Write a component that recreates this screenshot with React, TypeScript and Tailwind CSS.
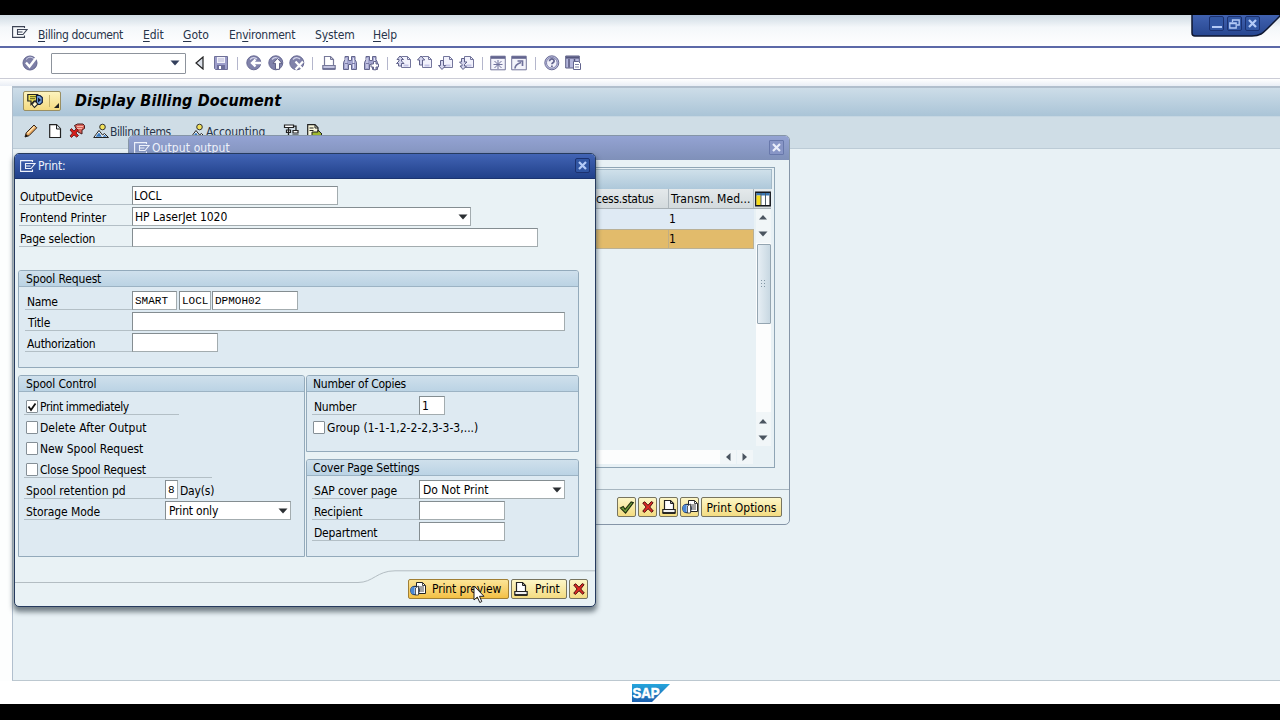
import React from "react";

type IconProps = { className?: string };

const Svg = ({ children, className = "h-4 w-4" }: { children: React.ReactNode; className?: string }) => (
  <svg viewBox="0 0 16 16" className={`shrink-0 ${className}`} fill="none">
    {children}
  </svg>
);

const MenuIcon = ({ className = "" }: IconProps) => (
  <svg viewBox="0 0 16 12" className={`h-3 w-4 shrink-0 ${className}`} fill="none" stroke="currentColor" strokeWidth="1.100">
    <path d="M12.500 2V.6H.6v10.800h11.900V9.500" />
    <path d="M15 3.500H5.500v5h5.500zM5.500 6h5" />
  </svg>
);

const OkIcon = () => (
  <Svg>
    <circle cx="8" cy="8" r="7" fill="#7d7fa6" stroke="#62648f" />
    <path d="M4 4.500Q8 0 12 4" stroke="#c9cbe4" />
    <path d="M4 7.500l3.500 4L14 3" stroke="#fff" strokeWidth="2.400" />
  </Svg>
);

const SaveIcon = () => (
  <Svg>
    <path d="M1.500 1.500h13v13h-12l-1-1z" fill="#9c9dca" stroke="#6f7098" />
    <path d="M4 2h8v6H4z" fill="#f2f2fa" />
    <path d="M5 4h6M5 6h6" stroke="#b5b5d5" />
    <path d="M4 10h8v5H4z" fill="#6d6e9a" />
    <path d="M6 11h2v3H6z" fill="#fff" />
  </Svg>
);

const RoundIcon = ({ kind }: { kind: "back" | "up" | "cancel" | "help" }) => (
  <Svg>
    <circle cx="7.800" cy="7.800" r="7" fill={kind === "help" ? "#b9bbdc" : "#8082aa"} stroke="#686a94" />
    {kind !== "help" && <path d="M4 4.500Q7 1 11 4" stroke="#d6d7ec" strokeWidth="1.200" />}
    {kind === "back" && <path d="M15.500 8H5.500M9.500 4.500L6 8l3.500 3.500" stroke="#fff" strokeWidth="2.400" />}
    {kind === "up" && <path d="M9.500 3.500l4.500 4.800h-2.500v6h-4v-6H5z" fill="#fff" stroke="#55577f" strokeWidth=".9" />}
    {kind === "cancel" && <path d="M6.500 6.500l7.500 8M14 6.500l-7.500 8" stroke="#fff" strokeWidth="2.200" />}
    {kind === "help" && (
      <>
        <circle cx="7.800" cy="7.800" r="5.300" fill="#f1f1fa" stroke="#7f81aa" />
        <path d="M5.500 6.300c0-3.200 4.800-3 4.600-.2C10 7.800 7.900 7.600 7.900 9.300M7.900 10.500v1.600" stroke="#62648f" strokeWidth="1.700" />
      </>
    )}
  </Svg>
);

const PrintIcon = ({ muted = false }: { muted?: boolean }) => (
  <Svg>
    <path d="M3.500 10.500v-9h6l3 3v6z" fill="#fff" stroke={muted ? "#77799a" : "#222"} strokeWidth="1.200" />
    <path d="M9.500 1.500v3h3" stroke={muted ? "#77799a" : "#222"} />
    <path d="M1.800 10.500h12.400v3.500H1.800z" fill={muted ? "#c3c4e0" : "#f2f2f2"} stroke={muted ? "#77799a" : "#222"} strokeWidth="1.200" />
    <path d="M1.800 14h12.400" stroke={muted ? "#66688f" : "#111"} strokeWidth="1.600" />
  </Svg>
);

const FindIcon = ({ plus = false }: { plus?: boolean }) => (
  <Svg>
    <path d="M3 1.500h3.500v4h3v-4H13v3l1.500 3v7h-5v-5h-3v5h-5v-7L3 4.500z" fill="#a5a6d0" stroke="#64668d" />
    <path d="M4 3v10M11.500 3v10" stroke="#e4e4f5" />
    <path d="M3 8.500h3M10 8.500h3" stroke="#7779a5" />
    {plus && <path d="M10.500 6.500h2.500v2.500h2.500v3H13v2.800h-2.500V12H8V9h2.500z" fill="#fff" stroke="#64668d" />}
  </Svg>
);

const PageNavIcon = ({ kind }: { kind: "first" | "prev" | "next" | "last" }) => (
  <Svg>
    <path d="M5.500 1.500h6l3 3v8h-9z" fill="#f2f2fc" stroke="#74769c" />
    <path d="M11.500 1.500v3h3" stroke="#74769c" />
    <path d="M7.500 10.500h5" stroke="#c4c5e6" strokeWidth="2" />
    {kind === "first" && <path d="M4 1l3.500 3.500H5.500V6L8 8.500H5.500V11h-3V8.500H.5L3 6V4.500H1z" fill="#d5d6ee" stroke="#5f618a" />}
    {kind === "prev" && <path d="M4 1l3.700 4H5.500v5h-3V5H.5z" fill="#d5d6ee" stroke="#5f618a" />}
    {kind === "next" && <path d="M4 14.500l3.700-4H5.500v-5h-3v5H.5z" fill="#d5d6ee" stroke="#5f618a" />}
    {kind === "last" && <path d="M4 14.500l3.500-3.500H5.500V9.500L8 7H5.500V3.500h-3V7H.5L3 9.500V11H1z" fill="#d5d6ee" stroke="#5f618a" />}
  </Svg>
);

const SessionIcon = ({ arrow = false }: { arrow?: boolean }) => (
  <Svg>
    <path d="M.7 1.200h14.600v13.600H.7z" fill="#f3f3fb" stroke="#74769c" />
    <path d="M1 2.500h14" stroke="#62648e" strokeWidth="2.600" />
    {arrow ? (
      <path d="M4 13.500q0-4 6-6M6.500 6h5v5" stroke="#70729c" strokeWidth="1.700" />
    ) : (
      <path d="M8 5v9M3.500 9.500h9M4.500 6l7 7M11.500 6l-7 7" stroke="#70729c" strokeWidth="1" />
    )}
  </Svg>
);

const LayoutIcon = () => (
  <Svg>
    <path d="M.7 1h13.600v12H.7z" fill="#b4b6dc" stroke="#5d5f86" />
    <path d="M1 2.500h13" stroke="#55577d" strokeWidth="2.200" />
    <path d="M4 4v8.500M9.500 4v3" stroke="#55577d" strokeWidth="1.500" />
    <path d="M8.500 6.500h5l2 2v6h-7z" fill="#fff" stroke="#62648e" />
    <path d="M10 9.500h4M10 12h4" stroke="#8082a8" />
  </Svg>
);

const ServicesIcon = () => (
  <Svg>
    <path d="M.8 1.500h10v6.500H7l-3 3.500V8H.8z" fill="#efe255" stroke="#222" strokeWidth="1.200" />
    <path d="M3 3.700h6M3 5.700h5" stroke="#555a20" />
    <path d="M9.500 2.500h3.500l2.300 2v5l-2.300 2H9.500z" fill="#6fa0e0" stroke="#111b38" strokeWidth="1.200" />
    <path d="M11 4.500l3 2.500-3 2.500z" fill="#111b38" />
    <path d="M5 11.500L8 8l3 3-3.500 3.500z" fill="#fff8cc" stroke="#222" strokeWidth="1.100" />
  </Svg>
);

const PencilIcon = () => (
  <Svg>
    <path d="M2 14l1.200-4.200L11 2l2.800 2.800L6 12.700z" fill="#e8a65c" stroke="#33251c" />
    <path d="M4.500 10.500l7-7" stroke="#ffe8b8" strokeWidth="1.300" />
    <path d="M2 14l1.200-2.700L5 13z" fill="#111" />
  </Svg>
);

const DocIcon = () => (
  <Svg>
    <path d="M2.700 1.700h6.800l4 4v8.800H2.700z" fill="#fff" stroke="#222" strokeWidth="1.200" />
    <path d="M9.500 2v4h4" fill="#dfe8ee" stroke="#222" />
  </Svg>
);

const CancelDocIcon = () => (
  <Svg>
    <path d="M5.500 2.500l3-1.500H14l1.500 1.500v3L13 7v4l-4-2z" fill="#d9625a" stroke="#4a1c1c" />
    <path d="M8 3.500h6M8 5.500h5" stroke="#f6b8a8" />
    <path d="M2.500 5.500L5 8l2.500-2.500L9.300 7.300 7 10l2.500 2.500-1.700 1.700L5 12l-2.500 2.500L1 13l2.500-3L1 7z" fill="#d51f1c" stroke="#5a1111" strokeWidth=".8" />
  </Svg>
);

const PersonIcon = () => (
  <Svg>
    <circle cx="9.500" cy="4" r="2.800" fill="#f3e25a" stroke="#333" />
    <path d="M.7 14.500L6 7.500l3.500 4.500 2-1.500 4 4z" fill="#fff" stroke="#222" />
    <path d="M2.500 13.800L6 9.500l3 4.300zM9.500 13.800l2-2 2.500 2z" fill="#3679c0" />
  </Svg>
);

const TreeIcon = () => (
  <Svg>
    <path d="M1.500 2h9v2.500h-9zM3.500 7h4v2.500h-4zM10 7.500h5V10h-5zM10 12h5v2.500h-5z" fill="#fff" stroke="#222" strokeWidth="1.200" />
    <path d="M10.500 3.200H13V7.500M5.500 4.500V14M5.500 13.300H10" stroke="#222" strokeWidth="1.300" />
  </Svg>
);

const DocFlowIcon = () => (
  <Svg>
    <path d="M1.700 1.700H9l3 3v9.800H1.700z" fill="#f8f6da" stroke="#222" strokeWidth="1.200" />
    <path d="M9 2v3h3M3.500 5h4M3.500 7.500h4" stroke="#222" />
    <path d="M6 9h6V7l4 4-4 4v-2H6z" fill="#9db72f" stroke="#222" />
  </Svg>
);

const CheckIcon = () => (
  <Svg className="h-[15px] w-[15px]">
    <path d="M1.500 8.500l3-1.500 2 3 6.500-8 2.300.8L7 14z" fill="#6f9d3c" stroke="#20300f" strokeWidth="1.200" />
  </Svg>
);

const CrossIcon = () => (
  <Svg className="h-[14px] w-[14px]">
    <path d="M2 3.500L4.200 2 8 6l3.800-4.200L13.800 3 10 8l4 4.500-1.800 1.500L8 10l-4 4.200-2-1.400L5.800 8z" fill="#dd2a26" stroke="#4a0b0b" strokeWidth="1.100" />
  </Svg>
);

const PreviewIcon = () => (
  <Svg>
    <path d="M6.500 1.500h6l3 3v8h-9z" fill="#fff" stroke="#222" />
    <path d="M12.500 1.500v3h3M9 6h5M9 8h5M9 10h5" stroke="#333" strokeWidth=".9" />
    <circle cx="5" cy="9.500" r="4.200" fill="#dcecff" stroke="#1c2d4f" strokeWidth="1.300" />
    <path d="M4.500 5.500a4 4 0 0 0 0 8z" fill="#4b87d4" />
    <path d="M5.500 7l3-2v9h-3z" fill="#fff" stroke="#333" strokeWidth=".8" />
  </Svg>
);

const ColumnsIcon = () => (
  <Svg>
    <path d="M.8 1.300h14.400v13.400H.8z" fill="#fff" stroke="#15171c" strokeWidth="1.500" />
    <path d="M1.500 3.300h13" stroke="#3978b5" strokeWidth="2.600" />
    <path d="M1.500 4.600H6V14H1.500z" fill="#f8dc1c" />
    <path d="M6 2v12M10.500 2v12" stroke="#4e5c68" />
  </Svg>
);

const Arrow = ({ dir, className = "" }: { dir: "up" | "down" | "left" | "right"; className?: string }) => (
  <svg viewBox="0 0 10 10" className={`h-[10px] w-[10px] shrink-0 ${className}`} fill="currentColor">
    {dir === "up" && <path d="M1 7.500L5 3l4 4.500z" />}
    {dir === "down" && <path d="M.5 2.500h9L5 7.500z" />}
    {dir === "left" && <path d="M7.500 1L3 5l4.500 4z" />}
    {dir === "right" && <path d="M2.500 1L7 5 2.500 9z" />}
  </svg>
);

const CloseX = () => (
  <svg viewBox="0 0 9 9" className="h-[9px] w-[9px]" fill="none" stroke="currentColor" strokeWidth="2.200">
    <path d="M1 1l7 7M8 1L1 8" />
  </svg>
);

const Sep = ({ className = "" }: IconProps) => <div className={`h-[13px] w-px shrink-0 bg-[#b4b6cc] ${className}`} />;

const Menu = ({ pre = "", hot, post, className }: { pre?: string; hot: string; post: string; className: string }) => (
  <span className={`shrink-0 ${className}`}>
    {pre}
    <span className="underline underline-offset-2">{hot}</span>
    {post}
  </span>
);

const Btn = ({ children, className, hot = false }: { children: React.ReactNode; className: string; hot?: boolean }) => (
  <button
    className={`flex h-5 shrink-0 items-center overflow-hidden rounded-[2px] border bg-linear-to-b ${
      hot ? "border-[#a07f35] from-[#fce596] to-[#f3c042]" : "border-[#77745f] from-[#fdf6c6] to-[#f4dc81]"
    } ${className}`}
  >
    {children}
  </button>
);

const Label = ({ children, className }: { children: React.ReactNode; className: string }) => (
  <div className={`h-[19px] shrink-0 border-b border-[#b3bfc6] pt-[2px] leading-[18px] ${className}`}>{children}</div>
);

const Field = ({ children, className, drop = false, mono = false }: { children?: React.ReactNode; className: string; drop?: boolean; mono?: boolean }) => (
  <div
    className={`flex h-[19px] shrink-0 items-center justify-between whitespace-pre border border-[#a3acaf] border-t-[#848d91] border-l-[#848d91] bg-white leading-[17px] ${className}`}
  >
    <span className={mono ? "pt-px font-['Liberation_Mono',monospace] text-[11px]" : ""}>{children}</span>
    {drop && <Arrow dir="down" className="mr-[2px] text-[#2b2f33]" />}
  </div>
);

const Group = ({ title, titleClass = "pl-[7px]", className, children }: { title: string; titleClass?: string; className: string; children: React.ReactNode }) => (
  <section className={`flex shrink-0 flex-col rounded-t-[3px] border border-[#93aabb] bg-[#deeaf2] ${className}`}>
    <h2 className={`h-4 shrink-0 rounded-t-[2px] border-b border-[#9cb3c4] bg-linear-to-b from-[#cfe0ec] to-[#bbd3e4] leading-4 ${titleClass}`}>
      {title}
    </h2>
    {children}
  </section>
);

const Check = ({ label, checked = false, className = "" }: { label: string; checked?: boolean; className?: string }) => (
  <label className={`flex h-[21px] shrink-0 items-center gap-[2px] ${className}`}>
    <span className="flex h-[13px] w-3 shrink-0 items-center justify-center rounded-[1px] border border-[#858f96] bg-white">
      {checked && (
        <svg viewBox="0 0 10 10" className="h-[10px] w-[10px]" fill="none" stroke="#111" strokeWidth="1.800">
          <path d="M1.500 4.500l2.500 3.500L8.500 1.500" />
        </svg>
      )}
    </span>
    <span>{label}</span>
  </label>
);

const WinBtn = ({ children }: { children: React.ReactNode }) => (
  <span className="flex h-[15px] w-[15px] shrink-0 items-center justify-center rounded-[2px] border border-[#1c3270] bg-[#3156a3] text-[#b4cbf7]">
    {children}
  </span>
);

function OutputDialog() {
  return (
    <div className="absolute top-[135px] left-[128px] flex h-[390px] w-[662px] flex-col overflow-hidden rounded-[5px] border border-[#8595a7] bg-[#e8f1f5]">
      <div className="flex h-6 shrink-0 items-center bg-linear-to-b from-[#94a3d3] to-[#7f90b9] pr-[5px] pb-px pl-[5px] text-[#eef2fb]">
        <MenuIcon />
        <span className="ml-[2px] flex-1 tracking-[0.1px]">Output output</span>
        <span className="flex h-[15px] w-[15px] items-center justify-center rounded-[1px] border border-[#6878ab] bg-[#8795c6] text-[#e9edfa]">
          <CloseX />
        </span>
      </div>
      <div className="mt-[7px] mr-[14px] flex h-[301px] shrink-0 flex-col border border-[#8fa5b5] p-px pr-[3px]">
        <div className="-mr-px h-5 shrink-0 border border-[#a3b9c8] border-b-0 bg-linear-to-b from-[#cfe0ea] to-[#aec8da]" />
        <div className="flex h-5 shrink-0 border-b border-[#a7b0b5] bg-linear-to-b from-[#e4e9eb] to-[#d3dadd] text-black">
          <div className="w-[538px] shrink-0 border-r border-[#adb7bd] pl-[465px] leading-5 tracking-[-0.25px]">cess.status</div>
          <div className="w-[85px] shrink-0 border-r border-[#adb7bd] pl-[2px] leading-5 tracking-[0.05px]">Transm. Med...</div>
          <div className="ml-px flex w-4 shrink-0 items-center">
            <ColumnsIcon />
          </div>
        </div>
        <div className="flex flex-1">
          <div className="flex flex-1 flex-col text-black">
            <div className="mr-[2px] flex h-5 bg-[#dfeaf4]">
              <div className="w-[538px]" />
              <div className="leading-5">1</div>
            </div>
            <div className="mr-[2px] flex h-5 border border-l-0 border-[#b9b096] bg-[#e2bb6b]">
              <div className="w-[538px] border-r border-[#c2ae82]" />
              <div className="leading-[19px]">1</div>
            </div>
            <div className="flex-1" />
            <div className="mb-[2px] flex h-[14px]">
              <div className="w-[589px] bg-[#fcfdfd]" />
              <div className="flex w-[16px] items-center justify-center bg-[#f1f6f8] text-[#4b5560]">
                <Arrow dir="left" />
              </div>
              <div className="ml-px flex w-[16px] items-center justify-center bg-[#f1f6f8] text-[#4b5560]">
                <Arrow dir="right" />
              </div>
            </div>
          </div>
          <div className="mb-5 flex w-[15px] flex-col items-center bg-[#fcfdfd] text-[#4b5560]">
            <div className="flex h-4 w-full items-center bg-[#f1f6f8] pl-[2px]">
              <Arrow dir="up" />
            </div>
            <div className="flex h-[18px] w-full items-center bg-[#f1f6f8] pl-[2px]">
              <Arrow dir="down" />
            </div>
            <div className="mt-px flex h-20 w-[14px] items-center justify-center rounded-[1px] border border-[#94a5b1] bg-linear-to-r from-[#e6eef4] to-[#c8d8e2]">
              <svg viewBox="0 0 7 9" className="h-[9px] w-[7px]" fill="#8296a4">
                <path d="M1 0h1v1H1zM4 0h1v1H4zM1 3h1v1H1zM4 3h1v1H4zM1 6h1v1H1zM4 6h1v1H4z" />
              </svg>
            </div>
            <div className="flex-1" />
            <div className="flex h-[17px] w-full items-center bg-[#f1f6f8] pl-[2px]">
              <Arrow dir="up" />
            </div>
            <div className="flex h-[17px] w-full items-center bg-[#f1f6f8] pl-[2px]">
              <Arrow dir="down" />
            </div>
          </div>
        </div>
      </div>
      <div className="mt-[21px] flex flex-1 gap-[2px] border-t border-[#a7b6c0] pt-[7px] pl-[488px] text-black">
        <Btn className="w-[19px] justify-center"><CheckIcon /></Btn>
        <Btn className="w-[19px] justify-center"><CrossIcon /></Btn>
        <Btn className="w-[19px] justify-center"><PrintIcon /></Btn>
        <Btn className="w-[19px] justify-center"><PreviewIcon /></Btn>
        <Btn className="w-[81px] justify-center pt-px">Print Options</Btn>
      </div>
    </div>
  );
}

function PrintDialog() {
  return (
    <div className="absolute top-[153px] left-[14px] flex h-[454px] w-[582px] flex-col rounded-[5px] border border-[#263b5e] bg-[#e9f2f5] text-black shadow-[0_4px_5px_1px_rgba(40,55,65,0.6)]">
      <div className="flex h-[25px] shrink-0 items-center rounded-t-[4px] border-b border-[#1b3470] bg-linear-to-b from-[#4264b5] to-[#21418a] pr-[5px] pb-px pl-[5px] text-[#eef2fb]">
        <MenuIcon />
        <span className="ml-[2px] flex-1 tracking-[-0.15px]">Print:</span>
        <WinBtn><CloseX /></WinBtn>
      </div>
      <div className="flex h-[91px] shrink-0 flex-col gap-[2px] pt-[7px] pl-1">
        <div className="flex">
          <Label className="w-[113px] pl-px tracking-[-0.15px]">OutputDevice</Label>
          <Field className="w-[206px] pt-px pl-px">LOCL</Field>
        </div>
        <div className="flex">
          <Label className="w-[113px] pl-px tracking-[-0.05px]">Frontend Printer</Label>
          <Field drop className="w-[339px] pt-px pl-[2px]">HP LaserJet 1020</Field>
        </div>
        <div className="flex">
          <Label className="w-[113px] pl-px tracking-[-0.2px]">Page selection</Label>
          <Field className="w-[406px]" />
        </div>
      </div>
      <Group title="Spool Request" titleClass="pl-[7px] tracking-[-0.15px]" className="ml-[3px] h-[98px] w-[561px]">
        <div className="flex flex-col gap-[2px] pt-1 pl-[6px]">
          <div className="flex">
            <Label className="w-[107px] pl-[2px] tracking-[-0.3px]">Name</Label>
            <Field mono className="w-[45px] pl-[2px]">SMART</Field>
            <Field mono className="ml-[2px] w-8 pl-[2px]">LOCL</Field>
            <Field mono className="ml-px w-[86px] pl-[2px]">DPMOH02</Field>
          </div>
          <div className="flex">
            <Label className="w-[107px] pl-[3px] tracking-[-0.2px]">Title</Label>
            <Field className="w-[433px]" />
          </div>
          <div className="flex">
            <Label className="w-[107px] pl-[2px] tracking-[-0.3px]">Authorization</Label>
            <Field className="w-[86px]" />
          </div>
        </div>
      </Group>
      <div className="mt-[7px] ml-[3px] flex gap-px">
        <Group title="Spool Control" titleClass="pl-[7px] tracking-[-0.15px]" className="h-[182px] w-[287px]">
          <div className="flex flex-col pt-1 pl-[5px]">
            <div className="h-[19px] w-[155px] border-b border-[#b3bfc6] pl-[2px]">
              <Check label="Print immediately" checked className="tracking-[-0.4px]" />
            </div>
            <Check label="Delete After Output" className="mt-[2px] pl-[2px] tracking-[0.05px]" />
            <Check label="New Spool Request" className="pl-[2px] tracking-[-0.05px]" />
            <div className="h-[19px] w-[188px] border-b border-[#b3bfc6] pl-[2px]">
              <Check label="Close Spool Request" className="tracking-[-0.22px]" />
            </div>
            <div className="mt-[2px] flex h-[19px]">
              <Label className="w-[141px] pl-[2px]">Spool retention pd</Label>
              <Field mono className="w-[13px] pl-[2px]">8</Field>
              <span className="pt-[2px] pl-[2px] leading-[18px] tracking-[-0.2px]">Day(s)</span>
            </div>
            <div className="mt-[2px] flex">
              <Label className="w-[141px] pl-[2px] tracking-[-0.08px]">Storage Mode</Label>
              <Field drop className="w-[126px] pt-px pl-[3px] tracking-[-0.2px]">Print only</Field>
            </div>
          </div>
        </Group>
        <div className="flex flex-col gap-[7px]">
          <Group title="Number of Copies" titleClass="pl-[6px] tracking-[-0.25px]" className="h-[77px] w-[273px]">
            <div className="flex flex-col pt-1 pl-[5px]">
              <div className="flex">
                <Label className="w-[107px] pl-[2px] tracking-[-0.2px]">Number</Label>
                <Field className="w-[26px] pt-px pl-[2px]">1</Field>
              </div>
              <Check label="Group (1-1-1,2-2-2,3-3-3,...)" className="mt-[2px] pl-[1px] tracking-[0.03px]" />
            </div>
          </Group>
          <Group title="Cover Page Settings" titleClass="pl-[6px] tracking-[-0.12px]" className="h-[98px] w-[273px]">
            <div className="flex flex-col gap-[2px] pt-1 pl-[5px]">
              <div className="flex">
                <Label className="w-[107px] pl-[2px] tracking-[-0.12px]">SAP cover page</Label>
                <Field drop className="w-[146px] pt-px pl-[3px]">Do Not Print</Field>
              </div>
              <div className="flex">
                <Label className="w-[107px] pl-[2px] tracking-[-0.2px]">Recipient</Label>
                <Field className="w-[86px]" />
              </div>
              <div className="flex">
                <Label className="w-[107px] pl-[2px] tracking-[-0.2px]">Department</Label>
                <Field className="w-[86px]" />
              </div>
            </div>
          </Group>
        </div>
      </div>
      <svg viewBox="0 0 580 14" className="mt-[13px] h-[14px] w-[580px] shrink-0" fill="none" stroke="#b3bdc2">
        <path d="M0 12.500H343C358 12.500 362 .8 380 .8H580" />
      </svg>
      <div className="-mt-[5px] flex pl-[393px]">
        <Btn hot className="w-[101px] pl-px">
          <PreviewIcon />
          <span className="ml-[6px] tracking-[-0.12px]">Print preview</span>
        </Btn>
        <Btn className="ml-[2px] w-[56px] pl-px">
          <PrintIcon />
          <span className="ml-[6px]">Print</span>
        </Btn>
        <Btn className="ml-[2px] w-[19px] justify-center"><CrossIcon /></Btn>
      </div>
    </div>
  );
}

export default function App() {
  return (
    <div className="relative flex h-[720px] w-[1280px] flex-col overflow-hidden bg-black pt-[15px] pb-4 font-['DejaVu_Sans_Condensed','DejaVu_Sans',sans-serif] text-[12px] whitespace-nowrap text-[#27344a]">
      <header className="flex h-[33px] shrink-0 items-center border-b-2 border-[#5c69a8] bg-linear-to-b from-[#cfdbe4] via-[#f4f7fa] via-40% to-white pt-2 pl-3">
        <MenuIcon className="mb-[6px] text-[#3c4354]" />
        <Menu hot="B" post="illing document" className="ml-[10px] w-[105px] tracking-[-0.38px]" />
        <Menu hot="E" post="dit" className="w-10 tracking-[-0.1px]" />
        <Menu hot="G" post="oto" className="w-[46px]" />
        <Menu pre="En" hot="v" post="ironment" className="w-[86px] tracking-[-0.25px]" />
        <Menu pre="S" hot="y" post="stem" className="w-[58px] tracking-[-0.1px]" />
        <Menu hot="H" post="elp" className="tracking-[-0.2px]" />
      </header>
      <div className="flex h-[31px] shrink-0 items-center border-b border-[#cbccd6] bg-white pl-[22px]">
        <OkIcon />
        <div className="ml-[13px] flex h-[21px] w-[135px] shrink-0 items-center justify-end rounded-[1px] border border-[#8d939c] bg-white pr-[5px] text-[#333f5c]">
          <Arrow dir="down" />
        </div>
        <svg viewBox="0 0 9 14" className="ml-[9px] h-[14px] w-[9px] shrink-0" fill="#dce1ea" stroke="#222" strokeWidth="1.200">
          <path d="M8 1v12L1 7z" />
        </svg>
        <div className="ml-[9px] flex"><SaveIcon /></div>
        <Sep className="ml-2" />
        <div className="ml-2 flex gap-[5.500px]">
          <RoundIcon kind="back" />
          <RoundIcon kind="up" />
          <RoundIcon kind="cancel" />
        </div>
        <Sep className="ml-[7px]" />
        <div className="ml-2 flex gap-[5px]">
          <PrintIcon muted />
          <FindIcon />
          <FindIcon plus />
        </div>
        <Sep className="ml-2" />
        <div className="ml-2 flex gap-[5px]">
          <PageNavIcon kind="first" />
          <PageNavIcon kind="prev" />
          <PageNavIcon kind="next" />
          <PageNavIcon kind="last" />
        </div>
        <Sep className="ml-[7px]" />
        <div className="ml-[7px] flex gap-[5px]">
          <SessionIcon />
          <SessionIcon arrow />
        </div>
        <Sep className="ml-2" />
        <div className="ml-2 flex gap-[5px]">
          <RoundIcon kind="help" />
          <LayoutIcon />
        </div>
      </div>
      <div className="h-[7px] shrink-0 bg-linear-to-b from-white to-[#e9eef5]" />
      <div className="flex min-h-0 flex-1 bg-[#fdfefe] pl-3">
        <main className="flex h-[595px] flex-1 flex-col border-t-2 border-b border-l border-[#b1bfcd] border-b-[#bcc8d0] bg-[#e8f1f5]">
          <div className="flex h-[29px] shrink-0 items-center border-b border-[#c5d6e2] bg-linear-to-b from-[#cddde8] to-[#aac4d7] pb-[2px] pl-[10px]">
            <div className="flex h-5 w-[38px] items-center rounded-[2px] border border-[#9a8f62] bg-linear-to-b from-[#fdf3bd] to-[#f4da80] pl-[3px]">
              <ServicesIcon />
              <div className="ml-[6px] h-3 w-px bg-[#c8b46c]" />
              <svg viewBox="0 0 5 5" className="mt-2 ml-[4px] h-[5px] w-[5px]" fill="#222"><path d="M5 0v5H0z" /></svg>
            </div>
            <h1 className="ml-[14px] text-[16px] font-bold text-black italic tracking-[0.13px]">Display Billing Document</h1>
          </div>
          <div className="flex h-[32px] shrink-0 items-center border-b border-[#bccbd6] bg-[#cfdde6] pb-[4px] pl-[10px]">
            <PencilIcon />
            <div className="ml-[8px] flex"><DocIcon /></div>
            <div className="ml-[6px] flex"><CancelDocIcon /></div>
            <div className="ml-2 flex"><PersonIcon /></div>
            <span className="mt-[3px] w-[81px] pl-px tracking-[-0.45px]">Billing items</span>
            <div className="flex"><PersonIcon /></div>
            <span className="mt-[3px] w-[77px] tracking-[-0.1px]">Accounting</span>
            <TreeIcon />
            <div className="ml-[7px] flex"><DocFlowIcon /></div>
          </div>
        </main>
      </div>
      <footer className="flex h-[23px] shrink-0 items-center bg-white pl-[632px]">
        <svg viewBox="0 0 38 18" className="h-[18px] w-[38px]">
          <defs>
            <linearGradient id="sap" x1="0" y1="0" x2="0" y2="1">
              <stop offset="0" stopColor="#25a5dc" />
              <stop offset="1" stopColor="#1b5fae" />
            </linearGradient>
          </defs>
          <path d="M0 0h38L20 18H0z" fill="url(#sap)" />
          <text x="0.500" y="14.200" fontFamily="Liberation Sans" fontWeight="bold" fontSize="15" fill="#fff" stroke="#fff" strokeWidth=".6" textLength="27" lengthAdjust="spacingAndGlyphs">SAP</text>
        </svg>
      </footer>
      <div className="absolute top-[15px] right-0 flex h-[23px] w-[90px]">
        <svg viewBox="0 0 90 23" className="absolute inset-0 h-[23px] w-[90px]">
          <defs>
            <linearGradient id="win" x1="0" y1="0" x2="0" y2="1">
              <stop offset="0" stopColor="#4264b3" />
              <stop offset="1" stopColor="#27468f" />
            </linearGradient>
          </defs>
          <path d="M2 -2v20q0 3 3 3h57c8 0 11-3 15-7L90 1V-2z" fill="url(#win)" stroke="#0f1730" strokeWidth="1.500" />
        </svg>
        <div className="relative flex gap-[3px] pt-px pl-[19px]">
          <WinBtn><div className="mt-[7px] h-[2px] w-[10px] bg-[#b4cbf7]" /></WinBtn>
          <WinBtn>
            <svg viewBox="0 0 11 10" className="h-[10px] w-[11px]" fill="none" stroke="currentColor" strokeWidth="1.300">
              <path d="M3.500 3V1h6.700v5H8M.8 4h6.400v5H.8zM.8 4.500h6.400" />
            </svg>
          </WinBtn>
          <WinBtn><CloseX /></WinBtn>
        </div>
      </div>
      <OutputDialog />
      <PrintDialog />
      <svg viewBox="0 0 12 19" className="absolute top-[585px] left-[473px] h-[19px] w-3" fill="#fff" stroke="#222">
        <path d="M1 1v14l3.300-3 2.500 5.500 2-1L6.500 11.300H11z" />
      </svg>
    </div>
  );
}
